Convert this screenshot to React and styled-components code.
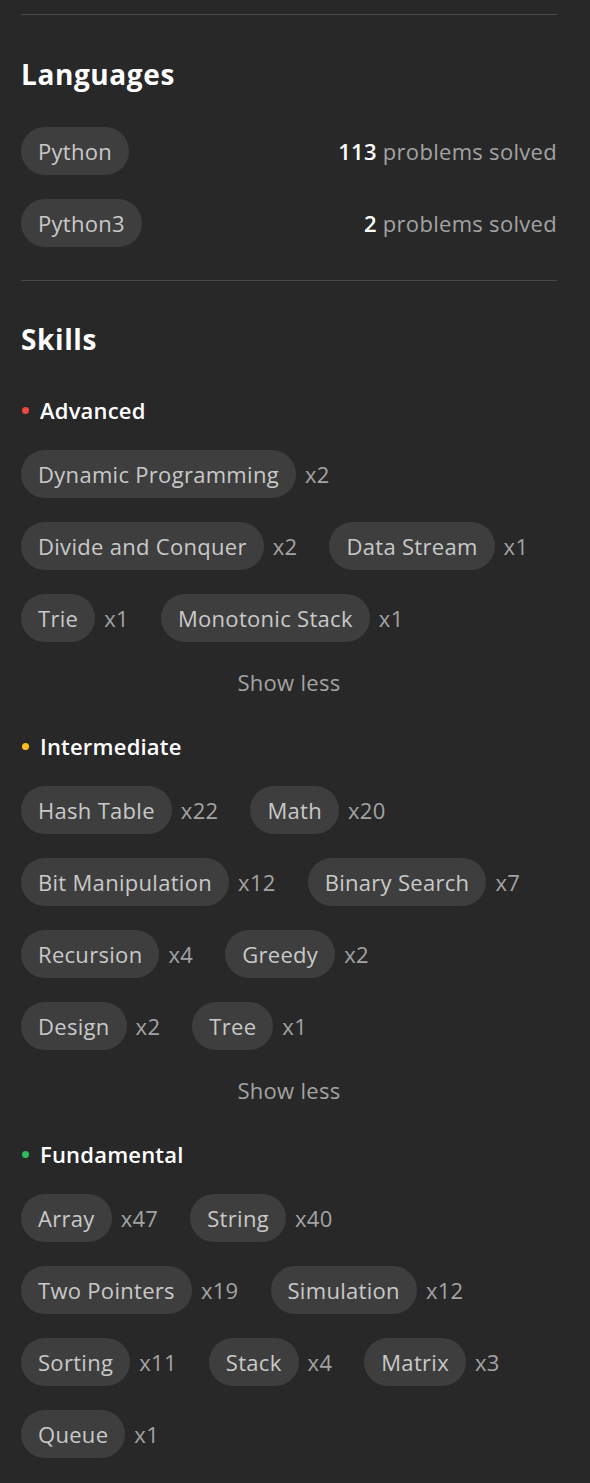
import React from "react";
import styled, { createGlobalStyle } from "styled-components";

const GlobalStyle = createGlobalStyle`
  html, body {
    margin: 0;
    padding: 0;
    background: #282828;
  }
  body {
    font-family: "Open Sans", "Noto Sans", sans-serif;
  }
`;

const Page = styled.div`
  width: 590px;
  box-sizing: border-box;
  padding: 14px 33px 25px 21px;
  background: #282828;
`;

const Divider = styled.div`
  height: 1px;
  background: #474747;
`;

const SectionTitle = styled.h2`
  margin: ${(p) => p.$before}px 0 ${(p) => p.$after}px;
  font-size: 28px;
  line-height: 34px;
  font-weight: 700;
  letter-spacing: 0.6px;
  color: #ffffff;
`;

const LangList = styled.div`
  display: flex;
  flex-direction: column;
  gap: 24px;
  margin-bottom: 33px;
`;

const LangRow = styled.div`
  display: flex;
  align-items: center;
  justify-content: space-between;
`;

const Pill = styled.span`
  display: inline-flex;
  align-items: center;
  height: 48px;
  padding: 0 17px;
  border-radius: 24px;
  background: #3e3e3e;
  color: #c9c9c9;
  font-size: 22px;
  letter-spacing: 0.3px;
  white-space: nowrap;
`;

const Solved = styled.span`
  font-size: 22px;
  letter-spacing: 0.3px;
  color: #a3a3a3;

  b {
    color: #ffffff;
    font-weight: 600;
  }
`;

const Level = styled.div`
  display: flex;
  align-items: center;
  gap: 11px;
  height: 32px;
  margin: ${(p) => (p.$first ? "38px" : "32px")} 0 24px;
  padding-left: 1px;
  font-size: 22px;
  font-weight: 600;
  letter-spacing: 0.2px;
  color: #ffffff;

  &::before {
    content: "";
    width: 7px;
    height: 7px;
    border-radius: 50%;
    background: ${(p) => p.$color};
  }
`;

const TagWrap = styled.div`
  display: flex;
  flex-wrap: wrap;
  row-gap: 24px;
  margin-right: -4px;
`;

const Tag = styled.div`
  display: flex;
  align-items: center;
  gap: 9px;
  margin-right: 32px;
`;

const Count = styled.span`
  font-size: 22px;
  letter-spacing: 0.3px;
  color: #a3a3a3;
`;

const ShowLess = styled.button`
  display: block;
  width: 100%;
  height: 32px;
  margin-top: 24px;
  padding: 0;
  border: 0;
  background: none;
  font-family: inherit;
  font-size: 22px;
  letter-spacing: 0.3px;
  color: #a3a3a3;
  text-align: center;
  cursor: pointer;
`;

const languages = [
  { name: "Python", solved: 113 },
  { name: "Python3", solved: 2 },
];

const skills = [
  {
    level: "Advanced",
    color: "#ef4743",
    more: true,
    tags: [
      ["Dynamic Programming", 2],
      ["Divide and Conquer", 2],
      ["Data Stream", 1],
      ["Trie", 1],
      ["Monotonic Stack", 1],
    ],
  },
  {
    level: "Intermediate",
    color: "#ffc01e",
    more: true,
    tags: [
      ["Hash Table", 22],
      ["Math", 20],
      ["Bit Manipulation", 12],
      ["Binary Search", 7],
      ["Recursion", 4],
      ["Greedy", 2],
      ["Design", 2],
      ["Tree", 1],
    ],
  },
  {
    level: "Fundamental",
    color: "#2cbb5d",
    more: false,
    tags: [
      ["Array", 47],
      ["String", 40],
      ["Two Pointers", 19],
      ["Simulation", 12],
      ["Sorting", 11],
      ["Stack", 4],
      ["Matrix", 3],
      ["Queue", 1],
    ],
  },
];

const App = () => {
  return (
    <Page>
      <GlobalStyle />
      <Divider />
      <SectionTitle $before={42} $after={36}>
        Languages
      </SectionTitle>
      <LangList>
        {languages.map((l) => (
          <LangRow key={l.name}>
            <Pill>{l.name}</Pill>
            <Solved>
              <b>{l.solved}</b> problems solved
            </Solved>
          </LangRow>
        ))}
      </LangList>
      <Divider />
      <SectionTitle $before={41} $after={0}>
        Skills
      </SectionTitle>
      {skills.map((s, i) => (
        <div key={s.level}>
          <Level $color={s.color} $first={i === 0}>
            {s.level}
          </Level>
          <TagWrap>
            {s.tags.map(([name, n]) => (
              <Tag key={name}>
                <Pill>{name}</Pill>
                <Count>x{n}</Count>
              </Tag>
            ))}
          </TagWrap>
          {s.more && <ShowLess>Show less</ShowLess>}
        </div>
      ))}
    </Page>
  );
};

export default App;
